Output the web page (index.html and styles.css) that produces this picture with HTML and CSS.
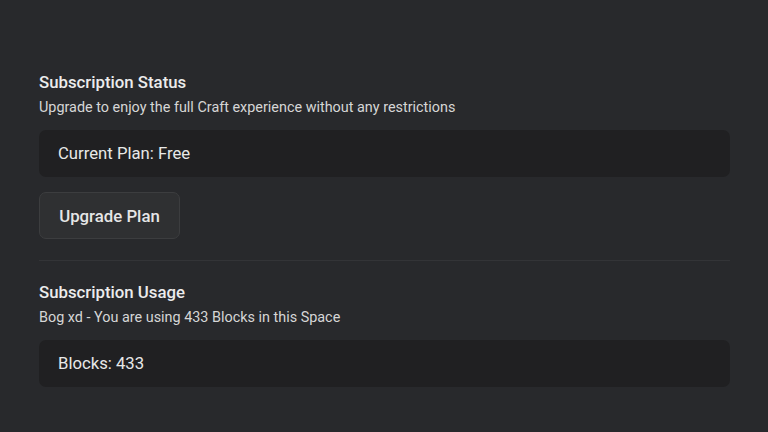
FILE: index.html
```html
<!DOCTYPE html>
<html>
<head>
<meta charset="utf-8">
<link rel="stylesheet" href="styles.css">
</head>
<body>
<main class="page">
  <section class="section">
    <h2 class="title">Subscription Status</h2>
    <p class="desc">Upgrade to enjoy the full Craft experience without any restrictions</p>
    <div class="info-box">Current Plan: Free</div>
    <button class="btn">Upgrade Plan</button>
  </section>
  <hr class="divider">
  <section class="section section-usage">
    <h2 class="title">Subscription Usage</h2>
    <p class="desc desc-usage">Bog xd - You are using 433 Blocks in this Space</p>
    <div class="info-box">Blocks: 433</div>
  </section>
</main>
</body>
</html>
```

FILE: styles.css
```css
html, body {
  margin: 0;
  padding: 0;
  background: #28292c;
  height: 100%;
}
body {
  font-family: Roboto, "Noto Sans", sans-serif;
  color: #e6e6e6;
}
.page {
  width: 691px;
  padding: 70px 0 0 39px;
  display: flex;
  flex-direction: column;
}
.section {
  display: flex;
  flex-direction: column;
  align-items: flex-start;
}
.title {
  margin: 0;
  font-size: 16.8px;
  font-weight: 500;
  line-height: 24px;
  color: #ececec;
}
.desc {
  margin: 4px 0 -2px;
  font-size: 14.4px;
  line-height: 20px;
  color: #d6d6d6;
}
.info-box {
  margin-top: 14px;
  align-self: stretch;
  box-sizing: border-box;
  height: 47px;
  display: flex;
  align-items: center;
  padding: 0 19px;
  background: #202022;
  border-radius: 7px;
  font-size: 16.7px;
  color: #e8e8e8;
}
.btn {
  margin-top: 15px;
  box-sizing: border-box;
  width: 141px;
  height: 47px;
  padding: 0;
  background: #2f3032;
  border: 1px solid #3c3d3f;
  border-radius: 7px;
  font-family: inherit;
  font-size: 16.8px;
  font-weight: 500;
  color: #e6e6e6;
}
.divider {
  margin: 21px 0 0;
  border: 0;
  height: 1px;
  background: #333437;
}
.section-usage {
  margin-top: 19px;
}
.desc-usage {
  margin-top: 4px;
  margin-bottom: -2px;
}
```
